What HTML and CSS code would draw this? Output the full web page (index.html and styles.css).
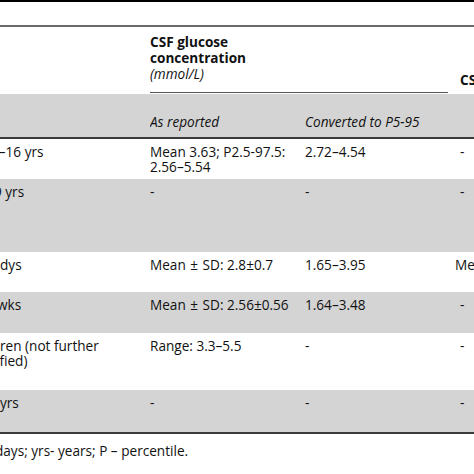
FILE: index.html
```html
<!DOCTYPE html>
<html>
<head>
<meta charset="utf-8">
<link rel="stylesheet" href="styles.css">
</head>
<body>
<div class="page">
  <div class="topbar"></div>
  <div class="gap-top"></div>
  <div class="rule-thin"></div>
  <div class="head">
    <div class="hcell c1"></div>
    <div class="hcell c2">
      <div class="htitle"><b>CSF glucose concentration</b><br><i>(mmol/L)</i></div>
      <div class="subrule"></div>
    </div>
    <div class="hcell c4"><b class="cs">CSF</b></div>
  </div>
  <div class="subhead">
    <div class="cell c1"></div>
    <div class="cell c2"><i>As reported</i></div>
    <div class="cell c3"><i>Converted to P5-95</i></div>
    <div class="cell c4"></div>
  </div>
  <div class="rule-dark"></div>
  <div class="body">
    <div class="row r1">
      <div class="cell c1"><span class="cut1">0–16 yrs</span></div>
      <div class="cell c2">Mean 3.63; P2.5-97.5: 2.56–5.54</div>
      <div class="cell c3">2.72–4.54</div>
      <div class="cell c4 dash">-</div>
    </div>
    <div class="row r2 shade">
      <div class="cell c1"><span class="cut2">9 yrs</span></div>
      <div class="cell c2">-</div>
      <div class="cell c3">-</div>
      <div class="cell c4 dash">-</div>
    </div>
    <div class="row r3">
      <div class="cell c1">dys</div>
      <div class="cell c2">Mean <span class="pm">±</span> SD: 2.8±0.7</div>
      <div class="cell c3">1.65–3.95</div>
      <div class="cell c4 me">Mean</div>
    </div>
    <div class="row r4 shade">
      <div class="cell c1"><span class="cut3">wks</span></div>
      <div class="cell c2">Mean <span class="pm">±</span> SD: 2.56±0.56</div>
      <div class="cell c3">1.64–3.48</div>
      <div class="cell c4 dash">-</div>
    </div>
    <div class="row r5">
      <div class="cell c1"><span class="line">ren (not further</span><span class="line cut4">ified)</span></div>
      <div class="cell c2">Range: 3.3–5.5</div>
      <div class="cell c3">-</div>
      <div class="cell c4 dash">-</div>
    </div>
    <div class="row r6 shade">
      <div class="cell c1">yrs</div>
      <div class="cell c2">-</div>
      <div class="cell c3">-</div>
      <div class="cell c4 dash">-</div>
    </div>
  </div>
  <div class="rule-dark"></div>
  <p class="foot"><span class="cut5">days; yrs- years; P – percentile.</span></p>
</div>
</body>
</html>
```
FILE: styles.css
```css
html, body {
  margin: 0;
  padding: 0;
  background: #fff;
}
.page {
  width: 474px;
  height: 474px;
  overflow: hidden;
  background: #fff;
  color: #111;
  font-family: "Open Sans", "DejaVu Sans", sans-serif;
  font-size: 13.6px;
  line-height: 15px;
}
.topbar {
  height: 2px;
  background: #000;
}
.gap-top {
  height: 23px;
}
.rule-thin {
  height: 2px;
  background: #6a6a6a;
}
.head {
  display: grid;
  grid-template-columns: 150px 305px 1fr;
  height: 66px;
}
.hcell.c2 {
  display: flex;
  flex-direction: column;
  justify-content: space-between;
  padding-top: 7px;
}
.htitle {
  line-height: 16px;
  width: 120px;
}
.subrule {
  height: 1px;
  width: 298px;
  background: #555;
}
.hcell.c4 {
  display: flex;
  align-items: flex-end;
  padding-left: 5px;
  padding-bottom: 6px;
  white-space: nowrap;
}
.subhead {
  display: grid;
  grid-template-columns: 150px 155px 150px 1fr;
  height: 43px;
  background: #d4d4d4;
  margin-top: 1px;
}
.subhead .cell {
  padding-top: 20px;
}
.rule-dark {
  height: 2px;
  background: #3a3a3a;
}
.row {
  display: grid;
  grid-template-columns: 150px 155px 150px 1fr;
}
.shade {
  background: #d4d4d4;
}
.cell {
  padding-top: 5px;
  white-space: nowrap;
  overflow: hidden;
}
.row .c2 {
  white-space: normal;
  padding-right: 8px;
}
.row .c1 {
  padding-right: 6px;
}
.line {
  display: block;
}
.r1 { height: 40px; }
.r2 { height: 73px; }
.r3 { height: 40px; }
.r4 { height: 41px; }
.r5 { height: 57px; }
.r6 { height: 42px; }
.dash {
  padding-left: 5px;
}
.me {
  padding-left: 0;
}
.pm {
  padding: 0 1px;
}
.cut1 { margin-left: -9px; }
.cut2 { margin-left: -6px; }
.cut3 { margin-left: -3px; }
.cut4 { margin-left: -4px; }
.cut5 { margin-left: -5px; }
.foot {
  margin: 0;
  padding-top: 9px;
  white-space: nowrap;
}
```
